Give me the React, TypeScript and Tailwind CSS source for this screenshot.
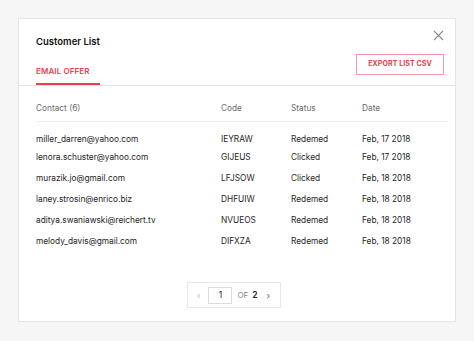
import React from "react";

const rows = [
  { email: "miller_darren@yahoo.com", code: "IEYRAW", status: "Redemed", date: "Feb, 17 2018" },
  { email: "lenora.schuster@yahoo.com", code: "GIJEUS", status: "Clicked", date: "Feb, 17 2018" },
  { email: "murazik.jo@gmail.com", code: "LFJSOW", status: "Clicked", date: "Feb, 18 2018" },
  { email: "laney.strosin@enrico.biz", code: "DHFUIW", status: "Redemed", date: "Feb, 18 2018" },
  { email: "aditya.swaniawski@reichert.tv", code: "NVUEOS", status: "Redemed", date: "Feb, 18 2018" },
  { email: "melody_davis@gmail.com", code: "DIFXZA", status: "Redemed", date: "Feb, 18 2018" },
];

function App() {
  return (
    <div
      className="w-[474px] h-[341px] bg-[#f6f6f6] pt-[18px] pl-[18px]"
      style={{ fontFamily: "Inter, 'Liberation Sans', sans-serif" }}
    >
      <div className="w-[438px] h-[304px] bg-white border border-[#e6e6e6] flex flex-col">
        {/* header */}
        <div className="flex justify-between border-b border-[#e3e3e3] pl-[17px] pr-[11px]">
          <div className="flex flex-col">
            <div className="pt-[17px] text-[9.5px] leading-[12px] font-semibold text-[#111]">
              Customer List
            </div>
            <div className="mt-[17px] pb-[6px] border-b-2 border-[#ee3f4f] text-[8px] leading-[12px] font-semibold text-[#ee3f4f] tracking-[0.1px]">
              EMAIL OFFER
            </div>
          </div>
          <div className="flex flex-col items-end">
            <svg
              className="mt-[11px]"
              width="11"
              height="11"
              viewBox="0 0 11 11"
              fill="none"
              stroke="#8a8a8a"
              strokeWidth="1.1"
            >
              <path d="M1 1L10 10M10 1L1 10" />
            </svg>
            <div className="mt-[13px] w-[88px] h-[21px] border border-[#f39aa1] flex items-center justify-center text-[7px] font-bold text-[#e8404d] tracking-[0.1px]">
              EXPORT LIST CSV
            </div>
          </div>
        </div>

        {/* table */}
        <div className="pl-[17px] pr-[7px]">
          <div className="flex pt-[16px] pb-[7px] border-b border-[#f0f0f0] text-[8.3px] leading-[12px] text-[#6b6b6b]">
            <div className="w-[185px]">Contact (6)</div>
            <div className="w-[70px]">Code</div>
            <div className="w-[71px]">Status</div>
            <div>Date</div>
          </div>
          <div className="pt-[9px] text-[8.3px] text-[#1e1e1e]">
            {rows.map((r, i) => (
              <div
                key={r.email}
                className={`flex items-center ${i === 0 ? "h-[16px]" : "h-[21px]"}`}
              >
                <div className="w-[185px]">{r.email}</div>
                <div className="w-[70px]">{r.code}</div>
                <div className="w-[71px]">{r.status}</div>
                <div>{r.date}</div>
              </div>
            ))}
          </div>
        </div>

        {/* pagination */}
        <div className="flex justify-center mt-[30px] pr-[6px]">
          <div className="w-[94px] h-[26px] border border-[#e8e8e8] flex items-center pl-[9px]">
            <span className="text-[9px] text-[#b5b5b5] leading-none">‹</span>
            <div className="ml-[8px] w-[24px] h-[17px] border border-[#dcdcdc] flex items-center justify-center text-[8.5px] text-[#222]">
              1
            </div>
            <span className="ml-[5px] text-[8px] text-[#8a8a8a]">OF</span>
            <span className="ml-[4px] text-[8.5px] font-semibold text-[#222]">2</span>
            <span className="ml-[9px] text-[9px] text-[#555] leading-none">›</span>
          </div>
        </div>
      </div>
    </div>
  );
}

export default App;
